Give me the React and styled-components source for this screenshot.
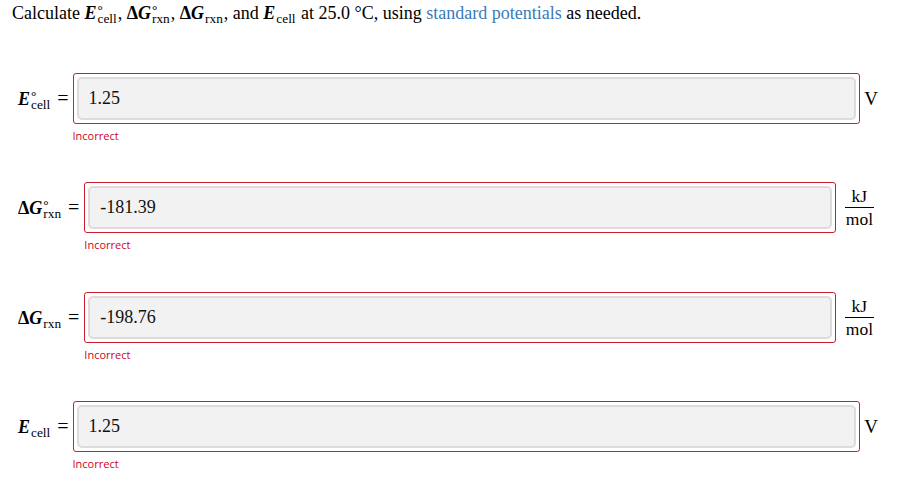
import styled, { createGlobalStyle } from "styled-components";

const GlobalStyle = createGlobalStyle`
  body {
    margin: 0;
    background: #ffffff;
    color: #000000;
    font-family: "Liberation Serif", "Times New Roman", serif;
  }
`;

const Page = styled.div`
  padding: 1px 12px 0 12px;
`;

const Prompt = styled.p`
  margin: 0;
  font-size: 18px;
  line-height: 24px;
`;

const Link = styled.a`
  color: #3a7ab8;
  text-decoration: none;
`;

const Sym = styled.span`
  font-weight: 700;
  font-style: ${({ $upright }) => ($upright ? "normal" : "italic")};
`;

const Scripts = styled.span`
  display: inline-block;
  vertical-align: -0.3em;
  font-size: 0.74em;
  line-height: 0.85;
  margin: 0 1px 0 1px;
`;

const Script = styled.span`
  display: block;
  ${({ $deg }) => $deg && "margin-bottom: -2px; font-weight: 700;"}
`;

const Fields = styled.div`
  padding: 48px 14px 0 6px;
  display: flex;
  flex-direction: column;
  gap: 39.4px;
`;

const Field = styled.div`
  display: grid;
  grid-template-columns: auto 1fr auto;
  grid-template-rows: auto auto;
  column-gap: ${({ $gap }) => $gap}px;
  align-items: center;
`;

const Label = styled.div`
  font-size: 18px;
  white-space: nowrap;
  margin-right: -${({ $gap }) => $gap - 5}px;
`;

const Equals = styled.span`
  margin-left: 6px;
  font-size: 20px;
`;

const AnswerBox = styled.div`
  border: 1px solid #cc1f2d;
  border-radius: 3px;
  padding: 3px;
`;

const Input = styled.input`
  display: block;
  width: 100%;
  box-sizing: border-box;
  height: 43px;
  border: 2px solid #dcdcdc;
  border-radius: 5px;
  background: #f2f2f2;
  padding: 0 10px;
  font-family: "Liberation Serif", "Times New Roman", serif;
  font-size: 18px;
  color: #111111;
  outline: none;
`;

const Volt = styled.div`
  font-size: 19px;
`;

const Fraction = styled.div`
  font-size: 17.5px;
  display: flex;
  flex-direction: column;
  align-items: center;
  line-height: 20px;
  padding: 0 1px;
  margin-right: 4px;
`;

const FracBar = styled.span`
  display: block;
  align-self: stretch;
  height: 1px;
  background: #000000;
  margin: 1px -1px;
`;

const Feedback = styled.div`
  grid-column: 2;
  margin-top: 5px;
  font-family: "Open Sans", "DejaVu Sans", sans-serif;
  font-size: 11px;
  line-height: 14px;
  color: #d0021b;
`;

const Ecell0 = () => (
  <>
    <Sym>E</Sym>
    <Scripts>
      <Script $deg>°</Script>
      <Script>cell</Script>
    </Scripts>
  </>
);

const DeltaG0 = () => (
  <>
    <Sym $upright>Δ</Sym>
    <Sym>G</Sym>
    <Scripts>
      <Script $deg>°</Script>
      <Script>rxn</Script>
    </Scripts>
  </>
);

const DeltaG = () => (
  <>
    <Sym $upright>Δ</Sym>
    <Sym>G</Sym>
    <Scripts>
      <Script>rxn</Script>
    </Scripts>
  </>
);

const Ecell = () => (
  <>
    <Sym>E</Sym>
    <Scripts>
      <Script>cell</Script>
    </Scripts>
  </>
);

const volts = <Volt>V</Volt>;
const kjPerMol = (
  <Fraction>
    <span>kJ</span>
    <FracBar />
    <span>mol</span>
  </Fraction>
);

const fields = [
  { id: "e0", symbol: <Ecell0 />, value: "1.25", unit: volts, gap: 4 },
  { id: "g0", symbol: <DeltaG0 />, value: "-181.39", unit: kjPerMol, gap: 9 },
  { id: "g", symbol: <DeltaG />, value: "-198.76", unit: kjPerMol, gap: 9 },
  { id: "e", symbol: <Ecell />, value: "1.25", unit: volts, gap: 4 },
];

export default function App() {
  return (
    <Page>
      <GlobalStyle />
      <Prompt>
        Calculate <Ecell0 />, <DeltaG0 />, <DeltaG />, and <Ecell /> at 25.0 °C,
        using <Link href="#">standard potentials</Link> as needed.
      </Prompt>
      <Fields>
        {fields.map(f => (
          <Field key={f.id} $gap={f.gap}>
            <Label $gap={f.gap}>
              {f.symbol}
              <Equals>=</Equals>
            </Label>
            <AnswerBox>
              <Input defaultValue={f.value} />
            </AnswerBox>
            {f.unit}
            <Feedback>Incorrect</Feedback>
          </Field>
        ))}
      </Fields>
    </Page>
  );
}
